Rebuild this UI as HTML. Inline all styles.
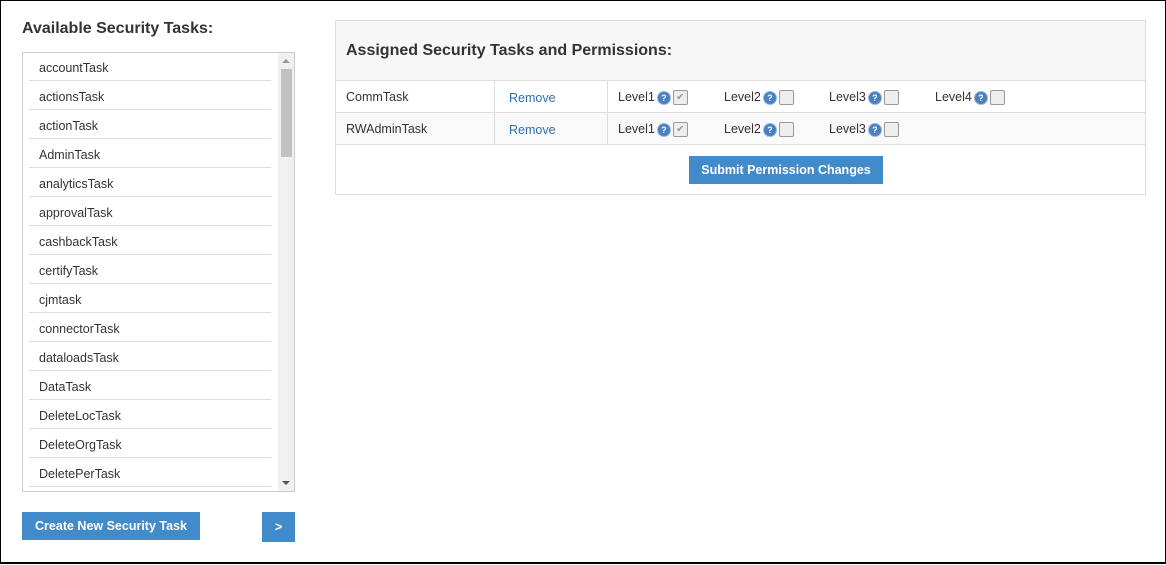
<!DOCTYPE html>
<html><head><style>
body{margin:0;width:1166px;height:565px;position:relative;font-family:"Liberation Sans",sans-serif;background:#fff;overflow:hidden}
.frame{position:absolute;left:0;top:0;width:1164px;height:561px;border:1px solid #000;border-bottom:2px solid #000}
.abs{position:absolute}
h2{position:absolute;left:22px;top:20px;margin:0;font-size:16px;font-weight:bold;color:#333}
.list{left:22px;top:52px;width:271px;height:438px;border:1px solid #ccc;overflow:hidden}
.item{position:absolute;left:6px;width:242px;height:28px;border-bottom:1px solid #ddd;font-size:12.5px;color:#333;padding-left:10px;line-height:31px;box-sizing:border-box}
.sb{left:255px;top:0;width:16px;height:438px;background:#f0f0f0}
.btn{background:#428bca;color:#fff;font-size:12.5px;font-weight:bold;text-align:center}
.panel{left:335px;top:20px;width:809px;height:173px;border:1px solid #ddd}
.row{position:absolute;left:0;width:809px;height:31px;border-top:1px solid #ddd;font-size:12.5px;color:#333}
.q{display:inline-block;width:12px;height:12px;border-radius:50%;background:#4a7fc0;color:#fff;font-size:9px;line-height:12px;text-align:center;font-weight:bold;vertical-align:middle;box-shadow:0 0 0 1px #9bb8dd;margin-left:3px}
.cb{display:inline-block;width:13px;height:13px;border:1px solid #999;border-radius:2px;background:#eee;vertical-align:middle;font-size:10px;line-height:13px;text-align:center;color:#999;margin-left:3px}
.lv{position:absolute;top:9px}
</style></head><body>
<div class="frame"></div>
<h2>Available Security Tasks:</h2>
<div class="abs list">
<div class="item" style="top:0">accountTask</div>
<div class="item" style="top:29px">actionsTask</div>
<div class="item" style="top:58px">actionTask</div>
<div class="item" style="top:87px">AdminTask</div>
<div class="item" style="top:116px">analyticsTask</div>
<div class="item" style="top:145px">approvalTask</div>
<div class="item" style="top:174px">cashbackTask</div>
<div class="item" style="top:203px">certifyTask</div>
<div class="item" style="top:232px">cjmtask</div>
<div class="item" style="top:261px">connectorTask</div>
<div class="item" style="top:290px">dataloadsTask</div>
<div class="item" style="top:319px">DataTask</div>
<div class="item" style="top:348px">DeleteLocTask</div>
<div class="item" style="top:377px">DeleteOrgTask</div>
<div class="item" style="top:406px">DeletePerTask</div>
<div class="abs sb"><div class="abs" style="left:3px;top:16px;width:11px;height:88px;background:#c1c1c1"></div>
<div class="abs" style="left:4px;top:6px;border:4px solid transparent;border-bottom:4px solid #999;border-top:0;width:0"></div>
<div class="abs" style="left:4px;top:428px;border:4px solid transparent;border-top:4px solid #555;border-bottom:0;width:0"></div></div>
</div>
<div class="abs btn" style="left:22px;top:512px;width:178px;height:28px;line-height:28px">Create New Security Task</div>
<div class="abs btn" style="left:262px;top:512px;width:33px;height:30px;line-height:30px">&gt;</div>
<div class="abs panel">
<div class="abs" style="left:0;top:0;width:809px;height:59px;background:#f7f7f7"></div>
<div class="abs" style="left:10px;top:21px;font-size:16px;font-weight:bold;color:#333">Assigned Security Tasks and Permissions:</div>
<div class="row" style="top:59px">
<div class="abs" style="left:10px;top:9px">CommTask</div>
<div class="abs" style="left:158px;top:0;height:31px;border-left:1px solid #ddd"></div>
<div class="abs" style="left:173px;top:10px;color:#2a6fb0">Remove</div>
<div class="abs" style="left:271px;top:0;height:31px;border-left:1px solid #ddd"></div>
<div class="lv" style="left:282px">Level1<span class="q">?</span><span class="cb">✔</span></div>
<div class="lv" style="left:388px">Level2<span class="q">?</span><span class="cb"></span></div>
<div class="lv" style="left:493px">Level3<span class="q">?</span><span class="cb"></span></div>
<div class="lv" style="left:599px">Level4<span class="q">?</span><span class="cb"></span></div>
</div>
<div class="row" style="top:91px;background:#f9f9f9">
<div class="abs" style="left:10px;top:9px">RWAdminTask</div>
<div class="abs" style="left:158px;top:0;height:31px;border-left:1px solid #ddd"></div>
<div class="abs" style="left:173px;top:10px;color:#2a6fb0">Remove</div>
<div class="abs" style="left:271px;top:0;height:31px;border-left:1px solid #ddd"></div>
<div class="lv" style="left:282px">Level1<span class="q">?</span><span class="cb">✔</span></div>
<div class="lv" style="left:388px">Level2<span class="q">?</span><span class="cb"></span></div>
<div class="lv" style="left:493px">Level3<span class="q">?</span><span class="cb"></span></div>
</div>
<div class="row" style="top:123px;height:50px"></div>
<div class="abs btn" style="left:353px;top:135px;width:194px;height:28px;line-height:28px">Submit Permission Changes</div>
</div>
</body></html>
